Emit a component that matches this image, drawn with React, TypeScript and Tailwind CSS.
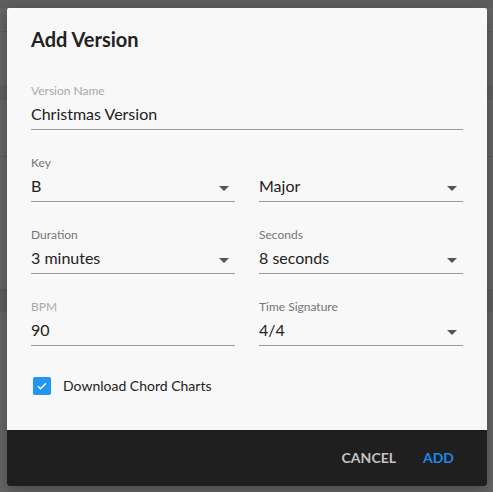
import React from 'react';

const font = { fontFamily: 'Lato, "Liberation Sans", sans-serif' };

function Arrow() {
  return (
    <svg width="10" height="5" viewBox="0 0 10 5" className="shrink-0">
      <path d="M0 0h10L5 5z" fill="#555555" />
    </svg>
  );
}

function TextField({ label, value }: { label: string; value: string }) {
  return (
    <div className="flex flex-col">
      <span className="text-[12px] leading-[14px] text-[#a8a8a8]">{label}</span>
      <div className="mt-[3px] flex h-[29px] items-start border-b border-[#9a9a9a]">
        <span className="text-[16px] leading-[26px] text-[#222]">{value}</span>
      </div>
    </div>
  );
}

function SelectField({ label, value }: { label: string; value: string }) {
  return (
    <div className="flex flex-col">
      <span className="text-[12px] leading-[14px] text-[#757575]">{label}</span>
      <div className="mt-[3px] flex h-[29px] items-start justify-between border-b border-[#9a9a9a] pr-[6px]">
        <span className="text-[16px] leading-[26px] text-[#222]">{value}</span>
        <div className="pt-[13px]">
          <Arrow />
        </div>
      </div>
    </div>
  );
}

export default function App() {
  return (
    <div className="relative h-[492px] w-[493px] overflow-hidden bg-[#666666]" style={font}>
      {/* page behind the overlay */}
      <div className="h-[8px] bg-[#5e5e5e]" />
      <div className="h-[24px] border-b border-[#5c5c5c]" />
      <div className="h-[53px]" />
      <div className="h-[15px] bg-[#606060]" />
      <div className="h-[57px] border-b border-[#5c5c5c]" />
      <div className="h-[133px] border-b border-[#5c5c5c]" />
      <div className="h-[22px] bg-[#5f5f5f]" />

      <div className="absolute left-[7px] top-[8px] flex h-[478px] w-[480px] flex-col overflow-hidden rounded-[2px] bg-[#f8f8f8] shadow-[0_4px_16px_rgba(0,0,0,0.3)]">
        <div className="flex flex-1 flex-col px-[24px] pt-[19px]">
          <h1 className="text-[20px] font-bold leading-[24px] text-[#222]">Add Version</h1>
          <div className="mt-[33px] flex flex-col gap-[26px]">
            <TextField label="Version Name" value="Christmas Version" />
            <div className="grid grid-cols-2 gap-x-[24px]">
              <SelectField label="Key" value="B" />
              <div className="pt-[17px]">
                <div className="flex h-[29px] items-start justify-between border-b border-[#9a9a9a] pr-[6px]">
                  <span className="text-[16px] leading-[26px] text-[#222]">Major</span>
                  <div className="pt-[13px]">
                    <Arrow />
                  </div>
                </div>
              </div>
            </div>
            <div className="grid grid-cols-2 gap-x-[24px]">
              <SelectField label="Duration" value="3 minutes" />
              <SelectField label="Seconds" value="8 seconds" />
            </div>
            <div className="grid grid-cols-2 gap-x-[24px]">
              <TextField label="BPM" value="90" />
              <SelectField label="Time Signature" value="4/4" />
            </div>
          </div>
          <div className="mt-[31px] flex items-center gap-[12px] pl-[2px]">
            <div className="flex h-[18px] w-[18px] items-center justify-center rounded-[2px] bg-[#2196f3]">
              <svg width="12" height="12" viewBox="0 0 24 24">
                <path d="M4 12.5l5 5L20 6.5" fill="none" stroke="#fff" strokeWidth="3" />
              </svg>
            </div>
            <span className="text-[14px] leading-[18px] text-[#222]">Download Chord Charts</span>
          </div>
        </div>
        <div className="flex h-[56px] items-center justify-end gap-[11px] bg-[#1f1f1f] pr-[25px]">
          <button className="px-[8px] py-[6px] text-[14px] font-bold leading-[16px] text-[#c4c4c4]">CANCEL</button>
          <button className="px-[8px] py-[6px] text-[14px] font-bold leading-[16px] text-[#1e88e5]">ADD</button>
        </div>
      </div>
    </div>
  );
}
